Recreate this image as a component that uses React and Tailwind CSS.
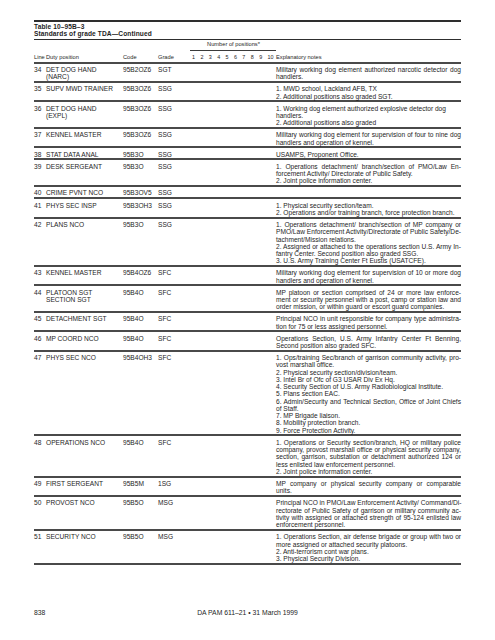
const rows = [
  { n: 34, duty: ["DET DOG HAND", "(NARC)"], code: "95B2OZ6", grade: "SGT", notes: [["Military working dog element authorized narcotic detector dog", "handlers."]] },
  { n: 35, duty: ["SUPV MWD TRAINER"], code: "95B3OZ6", grade: "SSG", notes: [["1. MWD school, Lackland AFB, TX"], ["2. Additional positions also graded SGT."]] },
  { n: 36, duty: ["DET DOG HAND", "(EXPL)"], code: "95B3OZ6", grade: "SSG", notes: [["^1. Working dog element authorized explosive detector dog", "handlers."], ["2. Additional positions also graded"]] },
  { n: 37, duty: ["KENNEL MASTER"], code: "95B3OZ6", grade: "SSG", notes: [["Military working dog element for supervision of four to nine dog", "handlers and operation of kennel."]] },
  { n: 38, duty: ["STAT DATA ANAL"], code: "95B3O", grade: "SSG", notes: [["USAMPS, Proponent Office."]] },
  { n: 39, duty: ["DESK SERGEANT"], code: "95B3O", grade: "SSG", notes: [["1. Operations detachment/ branch/section of PMO/Law En-", "forcement Activity/ Directorate of Public Safety."], ["2. Joint police information center."]] },
  { n: 40, duty: ["CRIME PVNT NCO"], code: "95B3OV5", grade: "SSG", notes: [] },
  { n: 41, duty: ["PHYS SEC INSP"], code: "95B3OH3", grade: "SSG", notes: [["1. Physical security section/team."], ["2. Operations and/or training branch, force protection branch."]] },
  { n: 42, duty: ["PLANS NCO"], code: "95B3O", grade: "SSG", notes: [
    ["1. Operations detachment/ branch/section of MP company or", "PMO/Law Enforcement Activity/Directorate of Public Safety/De-", "tachment/Mission relations."],
    ["2. Assigned or attached to the operations section U.S. Army In-", "fantry Center. Second position also graded SSG."],
    ["3. U.S. Army Training Center Ft Eustis (USATCFE)."],
  ] },
  { n: 43, duty: ["KENNEL MASTER"], code: "95B4OZ6", grade: "SFC", notes: [["Military working dog element for supervision of 10 or more dog", "handlers and operation of kennel."]] },
  { n: 44, duty: ["PLATOON SGT", "SECTION SGT"], code: "95B4O", grade: "SFC", notes: [["MP platoon or section comprised of 24 or more law enforce-", "ment or security personnel with a post, camp or station law and", "order mission, or within guard or escort guard companies."]] },
  { n: 45, duty: ["DETACHMENT SGT"], code: "95B4O", grade: "SFC", notes: [["Principal NCO in unit responsible for company type administra-", "tion for 75 or less assigned personnel."]] },
  { n: 46, duty: ["MP COORD NCO"], code: "95B4O", grade: "SFC", notes: [["Operations Section, U.S. Army Infantry Center Ft Benning,", "Second position also graded SFC."]] },
  { n: 47, duty: ["PHYS SEC NCO"], code: "95B4OH3", grade: "SFC", notes: [
    ["1. Ops/training Sec/branch of garrison community activity, pro-", "vost marshall office."],
    ["2. Physical security section/division/team."],
    ["3. Intel Br of Ofc of G3 USAR Div Ex Hq."],
    ["4. Security Section of U.S. Army Radiobiological Institute."],
    ["5. Plans section EAC."],
    ["6. Admin/Security and Technical Section, Office of Joint Chiefs", "of Staff."],
    ["7. MP Brigade liaison."],
    ["8. Mobility protection branch."],
    ["9. Force Protection Activity."],
  ] },
  { n: 48, duty: ["OPERATIONS NCO"], code: "95B4O", grade: "SFC", notes: [
    ["1. Operations or Security section/branch, HQ or military police", "company, provost marshall office or physical security company,", "section, garrison, substation or detachment authorized 124 or", "less enlisted law enforcement personnel."],
    ["2. Joint police information center."],
  ] },
  { n: 49, duty: ["FIRST SERGEANT"], code: "95B5M", grade: "1SG", notes: [["MP company or physical security company or comparable", "units."]] },
  { n: 50, duty: ["PROVOST NCO"], code: "95B5O", grade: "MSG", notes: [["Principal NCO in PMO/Law Enforcement Activity/ Command/Di-", "rectorate of Public Safety of garrison or military community ac-", "tivity with assigned or attached strength of 95-124 enlisted law", "enforcement personnel."]] },
  { n: 51, duty: ["SECURITY NCO"], code: "95B5O", grade: "MSG", notes: [
    ["1. Operations Section, air defense brigade or group with two or", "more assigned or attached security platoons."],
    ["2. Anti-terrorism cont war plans."],
    ["3. Physical Security Division."],
  ] },
];

const cols = "grid grid-cols-[12px_77px_35px_33px_85px_185px]";

function NoteLine({ text, last }) {
  // "^" marks a wrapped line that the original left ragged
  const ragged = text.startsWith("^");
  const t = ragged ? text.slice(1) : text;
  if (last || ragged) return <div className="whitespace-nowrap">{t}</div>;
  return <div className="whitespace-nowrap text-justify [text-align-last:justify]">{t}</div>;
}

function Row({ row }) {
  return (
    <div className={`${cols} pt-[2.4px] pb-[0.5px] border-b-2 border-[#4a4a4a] text-[6.6px] leading-[7.25px]`}>
      <div>{row.n}</div>
      <div>
        {row.duty.map((d) => (
          <div key={d} className="whitespace-nowrap">{d}</div>
        ))}
      </div>
      <div>{row.code}</div>
      <div>{row.grade}</div>
      <div />
      <div>
        {row.notes.map((p, i) => (
          <div key={i}>
            {p.map((line, j) => (
              <NoteLine key={j} text={line} last={j === p.length - 1} />
            ))}
          </div>
        ))}
      </div>
    </div>
  );
}

export default function App() {
  return (
    <div className="w-[495px] h-[640px] bg-white text-[#1e1e1e] font-['Liberation_Sans',Arial,sans-serif] pt-[20px] px-[34px]">
      <div className="w-[427px]">
        <div className="border-t-2 border-[#2e2e2e]" />
        <div className="pt-[0.5px] text-[6.6px] leading-[7px] font-bold tracking-[0.1px]">
          <div>Table 10–95B–3</div>
          <div>Standards of grade TDA—Continued</div>
        </div>
        <div className="mt-[2px] border-t border-[#2e2e2e]" />

        {/* header */}
        <div className="text-[5.7px] leading-[6px]">
          <div className={`${cols} pt-[1.5px]`}>
            <div className="col-start-5 text-center whitespace-nowrap">Number of positions*</div>
          </div>
          <div className={`${cols} mt-[2.5px]`}>
            <div className="col-start-5 -ml-[1px] h-px bg-[#3a3a3a]" />
          </div>
          <div className={`${cols} mt-[3.5px] pb-[1.5px] border-b-2 border-[#4a4a4a]`}>
            <div>Line</div>
            <div>Duty position</div>
            <div>Code</div>
            <div>Grade</div>
            <div className="grid grid-cols-[repeat(10,8.4px)] pl-[1px] text-[5.4px]">
              {[1, 2, 3, 4, 5, 6, 7, 8, 9, 10].map((k) => (
                <div key={k}>{k}</div>
              ))}
            </div>
            <div>Explanatory notes</div>
          </div>
        </div>

        {rows.map((r) => (
          <Row key={r.n} row={r} />
        ))}

        {/* footer */}
        <div className="relative mt-[44px] text-[6.8px] leading-[8px]">
          <div>838</div>
          <div className="absolute inset-x-0 top-0 text-center">DA PAM 611–21 • 31 March 1999</div>
        </div>
      </div>
    </div>
  );
}
